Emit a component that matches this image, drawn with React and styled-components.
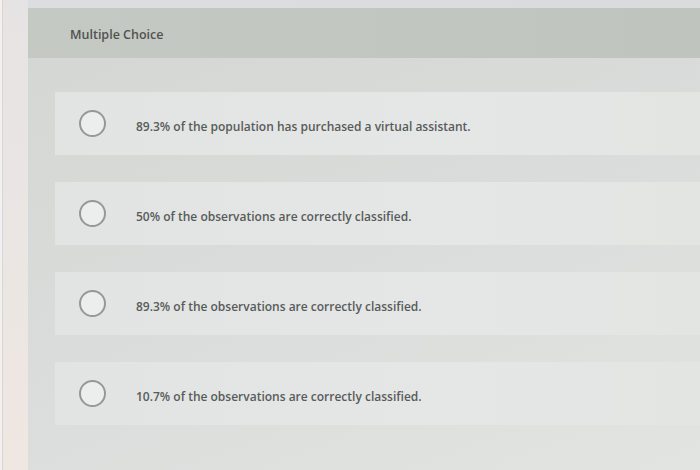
import React from 'react';
import styled, { createGlobalStyle } from 'styled-components';

const GlobalStyle = createGlobalStyle`
  html, body {
    margin: 0;
    padding: 0;
    height: 100%;
    background: #e9e5e3;
  }
  #root {
    height: 100%;
  }
`;

const Screen = styled.div`
  display: grid;
  grid-template-columns: 28px 1fr;
  width: 700px;
  height: 470px;
  overflow: hidden;
  font-family: "Open Sans", Lato, sans-serif;
`;

const SideStrip = styled.div`
  background: linear-gradient(180deg, #e6e3e4 0%, #ece6e3 60%, #eee7e2 100%);
  border-left: 2px solid #f3f0ef;
  box-shadow: inset 1px 0 0 #d8d5d5;
`;

const Main = styled.div`
  display: flex;
  flex-direction: column;
  padding-top: 8px;
  background: linear-gradient(90deg, #dcdde0 0%, #d9dbdd 100%);
`;

const Panel = styled.section`
  flex: 1;
  display: flex;
  flex-direction: column;
  background: linear-gradient(160deg, #d3d7d3 0%, #d9dcda 50%, #e2e4e2 100%);
`;

const Header = styled.header`
  height: 50px;
  display: flex;
  align-items: center;
  padding: 2px 0 0 42px;
  box-sizing: border-box;
  background: linear-gradient(90deg, #c5c9c3 0%, #c0c4be 100%);
  color: #4f5251;
  font-size: 12.5px;
  font-weight: 600;
`;

const Options = styled.div`
  display: flex;
  flex-direction: column;
  gap: 27px;
  padding: 34px 0 0 27px;
`;

const Option = styled.label`
  display: flex;
  align-items: center;
  height: 63px;
  padding-left: 24px;
  background: linear-gradient(90deg, #e1e4e3 0%, #e4e7e6 60%, #e3e5e3 100%);
  color: #585b5a;
  font-size: 12px;
  font-weight: 600;
`;

const Radio = styled.span`
  flex: none;
  width: 23px;
  height: 23px;
  border-radius: 50%;
  border: 2px solid #959897;
  background: #eceeed;
  margin-right: 30px;
`;

const Label = styled.span`
  padding-top: 5px;
`;

const choices = [
  '89.3% of the population has purchased a virtual assistant.',
  '50% of the observations are correctly classified.',
  '89.3% of the observations are correctly classified.',
  '10.7% of the observations are correctly classified.',
];

export default function App() {
  return (
    <>
      <GlobalStyle />
      <Screen>
        <SideStrip />
        <Main>
          <Panel>
            <Header>Multiple Choice</Header>
            <Options>
              {choices.map((text, i) => (
                <Option key={i}>
                  <Radio />
                  <Label>{text}</Label>
                </Option>
              ))}
            </Options>
          </Panel>
        </Main>
      </Screen>
    </>
  );
}
